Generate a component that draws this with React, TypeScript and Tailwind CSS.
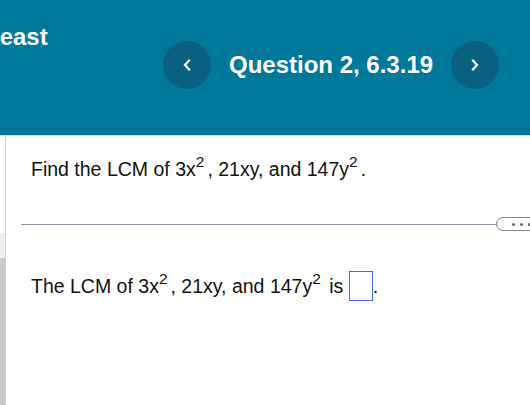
import React from "react";

function Chevron({ dir }: { dir: "left" | "right" }) {
    return (
        <svg width="10" height="14" viewBox="0 0 10 14" fill="none">
            <polyline
                points={dir === "left" ? "7,2.5 3,7 7,11.5" : "3,2.5 7,7 3,11.5"}
                stroke="white"
                strokeWidth="2.3"
                strokeLinecap="square"
            />
        </svg>
    );
}

function Sup({ children }: { children: React.ReactNode }) {
    return <span className="relative -top-[9px] pr-[3px] text-[15.5px]">{children}</span>;
}

export default function App() {
    return (
        <div className="h-[405px] w-[530px] overflow-hidden bg-white font-['Liberation_Sans',Arial,sans-serif]">
            <header className="flex h-[136px] border-b border-[#d3dbe3] bg-[#00789a] text-white">
                <div className="w-[163px] overflow-hidden pt-[25px]">
                    <div className="ml-[-15px] whitespace-nowrap text-[24px] font-bold leading-[24px]">Least</div>
                </div>
                <div className="flex items-center self-start pt-[41px]">
                    <button className="flex h-12 w-12 items-center justify-center rounded-full bg-[#0a6080]">
                        <Chevron dir="left" />
                    </button>
                    <h1 className="ml-[18px] whitespace-nowrap text-[24px] font-bold leading-none">Question 2, 6.3.19</h1>
                    <button className="ml-[18px] flex h-12 w-12 items-center justify-center rounded-full bg-[#0a6080]">
                        <Chevron dir="right" />
                    </button>
                </div>
            </header>

            <div className="flex h-[269px]">
                <div className="flex w-[5px] flex-col">
                    <div className="h-[97px] bg-white" />
                    <div className="h-[25px] bg-[#efefef]" />
                    <div className="flex-1 bg-[#c9c9c9]" />
                </div>
                <div className="w-px bg-[#cdd3dc]" />
                <main className="min-w-0 flex-1 text-[19.5px] leading-[28px] text-[#111]">
                    <p className="pl-[25px] pt-[19px]">
                        Find the LCM of 3x<Sup>2</Sup>, 21xy, and 147y<Sup>2</Sup>.
                    </p>
                    <div className="ml-[15px] mr-[-12px] mt-[32px] flex h-[14px] items-center">
                        <div className="h-px flex-1 bg-[#8b95a3]" />
                        <div className="flex h-[14px] w-[46px] shrink-0 items-center gap-[5px] rounded-full border border-[#7d8794] pl-[15px]">
                            <span className="h-[3px] w-[3px] rounded-full bg-[#666]" />
                            <span className="h-[3px] w-[3px] rounded-full bg-[#666]" />
                            <span className="h-[3px] w-[3px] rounded-full bg-[#666]" />
                        </div>
                    </div>
                    <p className="mt-[40px] pl-[25px]">
                        The LCM of 3x<Sup>2</Sup>, 21xy, and 147y<Sup>2</Sup> is{" "}
                        <span className="inline-block h-[30px] w-[24px] border border-[#3c6fd1] align-[-8px]" />.
                    </p>
                </main>
            </div>
        </div>
    );
}
